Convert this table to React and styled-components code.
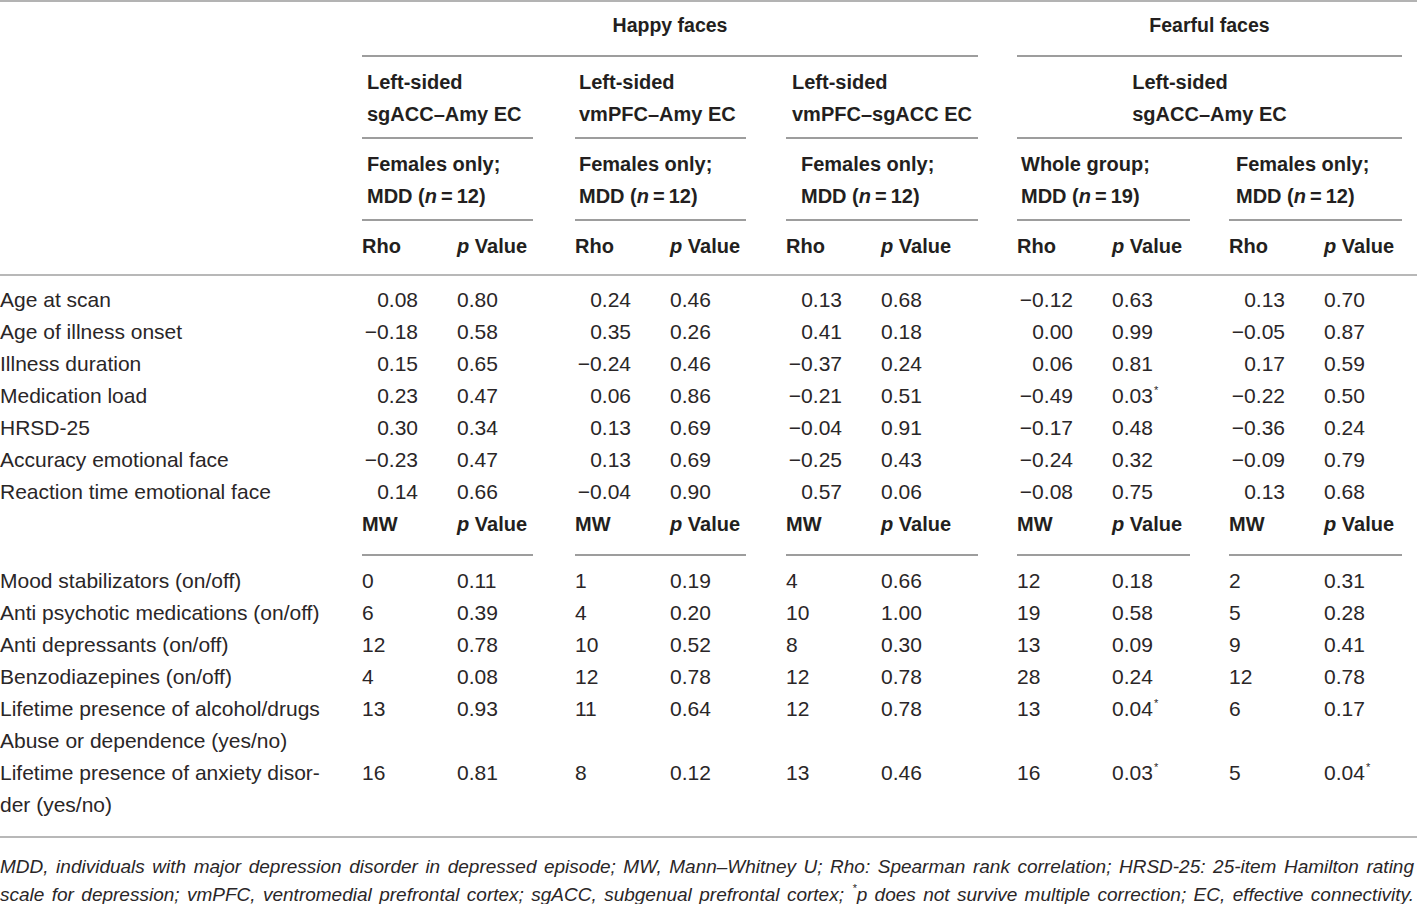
import React from 'react';
import styled, { createGlobalStyle } from 'styled-components';

// column grid: label | G1 | gap | G2 | gap | G3 | gap | G4 | gap | G5 | rest
const COLS = '362px 171px 42px 171px 40px 192px 39px 173px 39px 173px 1fr';
const GROUP_COLS = [2, 4, 6, 8, 10];

const subHeads = [
  { col: 2, lines: ['Females only;', 'MDD'], indent: 5 },
  { col: 4, lines: ['Females only;', 'MDD'], indent: 4 },
  { col: 6, lines: ['Females only;', 'MDD'], indent: 15 },
  { col: 8, lines: ['Whole group;', 'MDD'], indent: 4, n: 19 },
  { col: 10, lines: ['Females only;', 'MDD'], indent: 7 },
];

const rhoRows = [
  ['Age at scan', ['0.08', '0.80'], ['0.24', '0.46'], ['0.13', '0.68'], ['−0.12', '0.63'], ['0.13', '0.70']],
  ['Age of illness onset', ['−0.18', '0.58'], ['0.35', '0.26'], ['0.41', '0.18'], ['0.00', '0.99'], ['−0.05', '0.87']],
  ['Illness duration', ['0.15', '0.65'], ['−0.24', '0.46'], ['−0.37', '0.24'], ['0.06', '0.81'], ['0.17', '0.59']],
  ['Medication load', ['0.23', '0.47'], ['0.06', '0.86'], ['−0.21', '0.51'], ['−0.49', '0.03*'], ['−0.22', '0.50']],
  ['HRSD-25', ['0.30', '0.34'], ['0.13', '0.69'], ['−0.04', '0.91'], ['−0.17', '0.48'], ['−0.36', '0.24']],
  ['Accuracy emotional face', ['−0.23', '0.47'], ['0.13', '0.69'], ['−0.25', '0.43'], ['−0.24', '0.32'], ['−0.09', '0.79']],
  ['Reaction time emotional face', ['0.14', '0.66'], ['−0.04', '0.90'], ['0.57', '0.06'], ['−0.08', '0.75'], ['0.13', '0.68']],
];

const mwRows = [
  [['Mood stabilizators (on/off)'], ['0', '0.11'], ['1', '0.19'], ['4', '0.66'], ['12', '0.18'], ['2', '0.31']],
  [['Anti psychotic medications (on/off)'], ['6', '0.39'], ['4', '0.20'], ['10', '1.00'], ['19', '0.58'], ['5', '0.28']],
  [['Anti depressants (on/off)'], ['12', '0.78'], ['10', '0.52'], ['8', '0.30'], ['13', '0.09'], ['9', '0.41']],
  [['Benzodiazepines (on/off)'], ['4', '0.08'], ['12', '0.78'], ['12', '0.78'], ['28', '0.24'], ['12', '0.78']],
  [['Lifetime presence of alcohol/drugs', 'Abuse or dependence (yes/no)'], ['13', '0.93'], ['11', '0.64'], ['12', '0.78'], ['13', '0.04*'], ['6', '0.17']],
  [['Lifetime presence of anxiety disor-', 'der (yes/no)'], ['16', '0.81'], ['8', '0.12'], ['13', '0.46'], ['16', '0.03*'], ['5', '0.04*']],
];

const PValue = ({ value }) => {
  const star = value.endsWith('*');
  return (
    <span>
      {star ? value.slice(0, -1) : value}
      {star && <Star>*</Star>}
    </span>
  );
};

const App = () => {
  return (
    <Page>
      <GlobalStyle />
      <TopRule />

      <GridRow>
        <TitleCell $from={2} $to={7}>Happy faces</TitleCell>
        <TitleCell $from={8} $to={11}>Fearful faces</TitleCell>
      </GridRow>

      <GridRow>
        <HeadCell $from={2} $indent={5}>Left-sided<br />sgACC–Amy EC</HeadCell>
        <HeadCell $from={4} $indent={4}>Left-sided<br />vmPFC–Amy EC</HeadCell>
        <HeadCell $from={6} $indent={6}>Left-sided<br />vmPFC–sgACC EC</HeadCell>
        <HeadCell $from={8} $to={11} $centered>
          <span>Left-sided<br />sgACC–Amy EC</span>
        </HeadCell>
      </GridRow>

      <GridRow>
        {subHeads.map((h) => (
          <HeadCell key={h.col} $from={h.col} $indent={h.indent}>
            {h.lines[0]}
            <br />
            MDD (<i>n</i>{'\u2009=\u2009'}{h.n || 12})
          </HeadCell>
        ))}
      </GridRow>

      <StatHeadRow $full>
        {GROUP_COLS.map((c) => (
          <Pair key={c} $col={c}>
            <span>Rho</span>
            <span><i>p</i> Value</span>
          </Pair>
        ))}
      </StatHeadRow>

      <Section $top={8}>
        {rhoRows.map(([label, ...groups]) => (
          <DataRow key={label}>
            <Label>{label}</Label>
            {groups.map(([rho, p], i) => (
              <Pair key={i} $col={GROUP_COLS[i]}>
                <Num $right>{rho}</Num>
                <PValue value={p} />
              </Pair>
            ))}
          </DataRow>
        ))}
      </Section>

      <StatHeadRow>
        {GROUP_COLS.map((c) => (
          <Pair key={c} $col={c} $ruled>
            <span>MW</span>
            <span><i>p</i> Value</span>
          </Pair>
        ))}
      </StatHeadRow>

      <Section $top={9} $bottom={15}>
        {mwRows.map(([label, ...groups]) => (
          <DataRow key={label[0]}>
            <Label>
              {label.map((l, i) => (
                <div key={i}>{l}</div>
              ))}
            </Label>
            {groups.map(([mw, p], i) => (
              <Pair key={i} $col={GROUP_COLS[i]}>
                <Num>{mw}</Num>
                <PValue value={p} />
              </Pair>
            ))}
          </DataRow>
        ))}
      </Section>

      <Footnote>
        <FootLine>
          MDD, individuals with major depression disorder in depressed episode; MW, Mann–Whitney U; Rho: Spearman rank correlation; HRSD-25: 25-item Hamilton rating
        </FootLine>
        <FootLine>
          scale for depression; vmPFC, ventromedial prefrontal cortex; sgACC, subgenual prefrontal cortex; <Star>*</Star>p does not survive multiple correction; EC, effective connectivity.
        </FootLine>
      </Footnote>
    </Page>
  );
};

const GlobalStyle = createGlobalStyle`
  html, body {
    margin: 0;
    padding: 0;
    background: #ffffff;
  }
  body {
    font-family: 'Liberation Sans', Arial, sans-serif;
    color: #231f20;
  }
`;

const Page = styled.div`
  width: 1417px;
  font-size: 21px;
  line-height: 32px;
`;

const TopRule = styled.div`
  height: 2px;
  background: #b3b3b3;
`;

const GridRow = styled.div`
  display: grid;
  grid-template-columns: ${COLS};
`;

const TitleCell = styled.div`
  grid-column: ${({ $from, $to }) => `${$from} / ${$to}`};
  text-align: center;
  font-weight: 700;
  font-size: 19.5px;
  padding: 7px 0 14px;
  border-bottom: 2px solid #9d9d9d;
`;

const HeadCell = styled.div`
  grid-column: ${({ $from, $to }) => ($to ? `${$from} / ${$to}` : `${$from}`)};
  font-weight: 700;
  font-size: 20px;
  padding: 9px 0 7px ${({ $indent }) => $indent || 0}px;
  border-bottom: 2px solid #9d9d9d;
  text-align: ${({ $centered }) => ($centered ? 'center' : 'left')};

  span {
    display: inline-block;
    text-align: left;
  }
`;

const StatHeadRow = styled(GridRow)`
  font-weight: 700;
  font-size: 20px;
  padding-top: ${({ $full }) => ($full ? 9 : 0)}px;
  padding-bottom: ${({ $full }) => ($full ? 12 : 0)}px;
  border-bottom: ${({ $full }) => ($full ? '2px solid #b8b8b8' : 'none')};
`;

const Pair = styled.div`
  grid-column: ${({ $col }) => $col};
  display: grid;
  grid-template-columns: 95px 1fr;
  align-self: start;
  padding-bottom: ${({ $ruled }) => ($ruled ? 14 : 0)}px;
  border-bottom: ${({ $ruled }) => ($ruled ? '2px solid #9d9d9d' : 'none')};
`;

const Section = styled.div`
  padding-top: ${({ $top }) => $top || 0}px;
  padding-bottom: ${({ $bottom }) => $bottom || 0}px;
`;

const DataRow = styled(GridRow)`
  color: #2a2627;
`;

const Label = styled.div`
  grid-column: 1;
  white-space: nowrap;
`;

const Num = styled.span`
  width: 56px;
  text-align: ${({ $right }) => ($right ? 'right' : 'left')};
`;

const Star = styled.sup`
  font-size: 11px;
  line-height: 0;
  vertical-align: 9px;
  margin-left: 1px;
`;

const Footnote = styled.div`
  border-top: 2px solid #b8b8b8;
  padding-top: 15px;
  font-style: italic;
  font-size: 19px;
  line-height: 28px;
  color: #2a2627;
`;

const FootLine = styled.div`
  text-align: justify;
  text-align-last: justify;
  padding-right: 3px;
`;

export default App;
